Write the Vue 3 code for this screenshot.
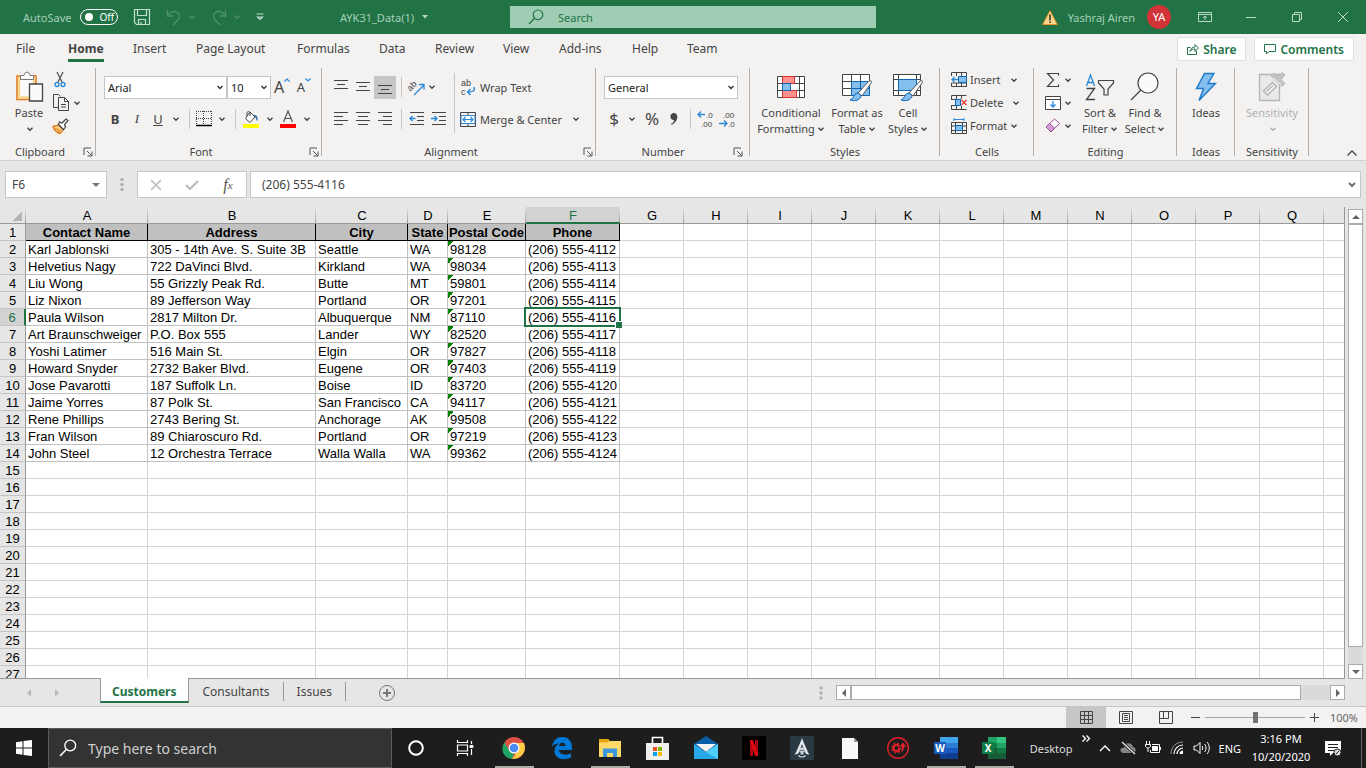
<script setup>
import { computed, ref } from "vue";

const menuTabs = ["File", "Home", "Insert", "Page Layout", "Formulas", "Data", "Review", "View", "Add-ins", "Help", "Team"];
const activeMenu = ref("Home");

const columns = "ABCDEFGHIJKLMNOPQ".split("");
const headings = ["Contact Name", "Address", "City", "State", "Postal Code", "Phone"];
const customers = [
  ["Karl Jablonski", "305 - 14th Ave. S. Suite 3B", "Seattle", "WA", "98128", "(206) 555-4112"],
  ["Helvetius Nagy", "722 DaVinci Blvd.", "Kirkland", "WA", "98034", "(206) 555-4113"],
  ["Liu Wong", "55 Grizzly Peak Rd.", "Butte", "MT", "59801", "(206) 555-4114"],
  ["Liz Nixon", "89 Jefferson Way", "Portland", "OR", "97201", "(206) 555-4115"],
  ["Paula Wilson", "2817 Milton Dr.", "Albuquerque", "NM", "87110", "(206) 555-4116"],
  ["Art Braunschweiger", "P.O. Box 555", "Lander", "WY", "82520", "(206) 555-4117"],
  ["Yoshi Latimer", "516 Main St.", "Elgin", "OR", "97827", "(206) 555-4118"],
  ["Howard Snyder", "2732 Baker Blvd.", "Eugene", "OR", "97403", "(206) 555-4119"],
  ["Jose Pavarotti", "187 Suffolk Ln.", "Boise", "ID", "83720", "(206) 555-4120"],
  ["Jaime Yorres", "87 Polk St.", "San Francisco", "CA", "94117", "(206) 555-4121"],
  ["Rene Phillips", "2743 Bering St.", "Anchorage", "AK", "99508", "(206) 555-4122"],
  ["Fran Wilson", "89 Chiaroscuro Rd.", "Portland", "OR", "97219", "(206) 555-4123"],
  ["John Steel", "12 Orchestra Terrace", "Walla Walla", "WA", "99362", "(206) 555-4124"],
];
const emptyRows = 30;

const rows = computed(() => {
  const list = [headings, ...customers];
  while (list.length < emptyRows) {
    list.push([]);
  }
  return list;
});

const selected = ref({ row: 5, col: 5 });
const cellName = computed(() => columns[selected.value.col] + (selected.value.row + 1));
const cellValue = computed(() => rows.value[selected.value.row][selected.value.col] || "");

const sheets = ["Customers", "Consultants", "Issues"];
const activeSheet = ref("Customers");
const zoom = ref(100);
const fontName = ref("Arial");
const fontSize = ref("10");
const numberFormat = ref("General");

function selectCell(row, col) {
  selected.value = { row, col };
}

function cellClass(row, col) {
  return {
    heading: row === 0 && col < 6,
    bordered: row > 0 && row <= customers.length && col < 6,
    flagged: row > 0 && row <= customers.length && col === 4,
    current: row === selected.value.row && col === selected.value.col,
  };
}
</script>

<template>
  <div class="window">
    <svg class="defs" aria-hidden="true">
      <symbol id="chev" viewBox="0 0 8 8"><path d="M1.5 2.8 4 5.2 6.5 2.8" fill="none" stroke="currentColor" stroke-width="1.4" /></symbol>
      <symbol id="launch" viewBox="0 0 10 10"><path d="M1 8V1h7M4 4l4.500 4.500M9 4.500V9H4.500" fill="none" stroke="#555" /></symbol>
      <symbol id="lens" viewBox="0 0 16 16"><circle cx="10" cy="5.800" r="4.800" fill="none" stroke="currentColor" stroke-width="1.200" /><path d="M6.500 9.300 1 15" stroke="currentColor" stroke-width="1.300" /></symbol>
    </svg>

    <header class="titlebar">
      <div class="quick">
        <label class="autosave">AutoSave <span class="toggle"><input type="checkbox" class="toggle-input" /><span class="knob"></span>Off</span></label>
        <button aria-label="Save"><svg width="18" height="18" viewBox="0 0 18 18" fill="none" stroke="#c5ddcf" stroke-width="1.200"><path d="M1.500 1.500h15v15h-13l-2-2zM4.500 1.500v6h9v-6M5.500 16.500v-5h7v5M8 16v-2" /></svg></button>
        <button class="faded" aria-label="Undo"><svg width="16" height="18" viewBox="0 0 16 18" fill="none" stroke="currentColor" stroke-width="1.400"><path d="M1.500 2v6h6M1.500 8c3-5 9-6 11.500-2 2 4-2 7-6 11" /></svg><svg class="chev"><use href="#chev" /></svg></button>
        <button class="faded" aria-label="Redo"><svg width="16" height="18" viewBox="0 0 16 18" fill="none" stroke="currentColor" stroke-width="1.400"><path d="M14.500 2v6h-6M14.500 8c-3-5-9-6-11.500-2-2 4 2 7 6 11" /></svg><svg class="chev"><use href="#chev" /></svg></button>
        <button aria-label="Customize"><svg width="8" height="8" viewBox="0 0 8 8" fill="none" stroke="#c5ddcf" stroke-width="1.200"><path d="M.500 1h7M1.500 4h5L4 6.500z" /></svg></button>
      </div>
      <button class="doc">AYK31_Data(1) <svg width="6" height="4" viewBox="0 0 6 4"><path d="M0 0h6L3 3.500z" fill="#b5d6c3" /></svg></button>
      <label class="search"><svg width="16" height="16"><use href="#lens" /></svg><input type="text" placeholder="Search" aria-label="Search" /></label>
      <div class="account">
        <svg width="16" height="15" viewBox="0 0 16 15"><path d="M8 .800 15.300 14.500H.700z" fill="#fbd78a" stroke="#e8912d" /><path d="M8 4.500v6M8 11.500v1.500" stroke="#333" stroke-width="1.600" /></svg>
        <span class="user">Yashraj Airen</span>
        <span class="avatar">YA</span>
        <div class="controls">
          <button aria-label="Ribbon options"><svg width="14" height="12" viewBox="0 0 14 12"><path d="M.500 1.500h13v9H.500zM.500 3.500h13M7 9V5M5 7l2-2 2 2" /></svg></button>
          <button aria-label="Minimize"><svg width="12" height="12" viewBox="0 0 12 12"><path d="M1 6.500h10" /></svg></button>
          <button aria-label="Restore"><svg width="12" height="12" viewBox="0 0 12 12"><path d="M1.500 3.500h7v7h-7zM3.500 3.500v-2h7v7h-2" /></svg></button>
          <button aria-label="Close"><svg width="12" height="12" viewBox="0 0 12 12"><path d="m1 1 10 10M11 1 1 11" /></svg></button>
        </div>
      </div>
    </header>

    <nav class="menu">
      <div class="menu-tabs">
        <button v-for="tab in menuTabs" :key="tab" :class="{ active: tab === activeMenu }" @click="activeMenu = tab"><span>{{ tab }}</span></button>
      </div>
      <div class="menu-actions">
        <button><svg width="12" height="12" viewBox="0 0 12 12" fill="none" stroke="#217346"><path d="M3.500 4.500h-3v7h9V8M3 8.500c.500-3 2.500-4.500 5-4.500V1.500l3.500 3.500L8 8.500V6C6 6 4 6.500 3 8.500z" /></svg>Share</button>
        <button><svg width="12" height="12" viewBox="0 0 12 12" fill="none" stroke="#217346"><path d="M.500 1.500h11v7H5l-2.500 2.500V8.500h-2z" /></svg>Comments</button>
      </div>
    </nav>

    <section class="ribbon">
      <div class="group clipboard">
        <div class="body">
          <button class="big">
            <span class="pic"><svg width="28" height="32" viewBox="0 0 28 32"><path d="M2 5h19v23.500H2z" fill="#fafafa" stroke="#e07a1f" stroke-width="1.600" /><path d="M4 7h15v19.500H4z" fill="none" stroke="#f8d48c" stroke-width="2.400" /><path d="M5.500 8.500v-4h3.500c.500-4.500 5.500-4.500 6 0h3.500v4z" fill="#fff" stroke="#777" /><path d="M14.500 13h13v17h-13z" fill="#fafafa" stroke="#444" stroke-width="1.300" /></svg></span>
            Paste
            <span><svg class="chev"><use href="#chev" /></svg></span>
          </button>
          <div class="stack">
            <button aria-label="Cut"><svg width="16" height="17" viewBox="0 0 16 17" fill="none"><path d="m5 1 5 10M11 1 6 11" stroke="#555" stroke-width="1.300" /><circle cx="5" cy="13.500" r="2" stroke="#2b88d8" stroke-width="1.300" /><circle cx="11" cy="13.500" r="2" stroke="#2b88d8" stroke-width="1.300" /></svg></button>
            <button aria-label="Copy"><svg width="18" height="17" viewBox="0 0 18 17" fill="none" stroke="#444"><path d="M6 13.500H1.500v-13h5l2 2M6.500 3.500h6l4 4v9h-10zM12.500 3.500v4h4M9 10.500h5M9 13h5" /></svg><svg class="chev"><use href="#chev" /></svg></button>
            <button aria-label="Format Painter"><svg width="17" height="16" viewBox="0 0 17 16"><path d="M1 8.500 6.500 7l5 4.500L8 15.500c-3-1-6-3-7-7z" fill="#fbd78a" stroke="#e07a1f" stroke-width="1.400" /><path d="m3 11 3 0 1 3.500M6 14l3-3" stroke="#e07a1f" fill="none" /><path d="m6.500 6.500 1-2.500 2.500 1 4-4L16 2.500l-3.500 4 1 2.500-2 2.500z" fill="#fff" stroke="#444" stroke-width="1.200" /></svg></button>
          </div>
        </div>
        <div class="caption"><span>Clipboard</span><button aria-label="Clipboard options"><svg width="10" height="10"><use href="#launch" /></svg></button></div>
      </div>

      <div class="group font">
        <div class="body rows">
          <div class="font-top">
            <select v-model="fontName" aria-label="Font"><option>Arial</option></select>
            <select v-model="fontSize" aria-label="Font size"><option>10</option></select>
            <button class="grow">A<svg width="6" height="4" viewBox="0 0 6 4"><path d="M.500 3.500 3 1l2.500 2.500" fill="none" stroke="#2b88d8" stroke-width="1.200" /></svg></button>
            <button class="shrink">A<svg width="6" height="4" viewBox="0 0 6 4"><path d="M.500.500 3 3 5.500.500" fill="none" stroke="#2b88d8" stroke-width="1.200" /></svg></button>
          </div>
          <div class="font-bottom">
            <button class="glyph bold">B</button>
            <button class="glyph italic">I</button>
            <button class="glyph under">U</button>
            <button aria-label="Underline options"><svg class="chev"><use href="#chev" /></svg></button>
            <i class="rule"></i>
            <button aria-label="Borders"><svg width="16" height="16" viewBox="0 0 16 16" fill="none" stroke="#444"><path d="M.500 0v14M7.500 0v14M15.500 0v14M0 .500h16M0 7.500h16" stroke-dasharray="1 1" /><path d="M0 14.500h16" stroke="#000" stroke-width="1.500" /></svg></button>
            <button aria-label="Border options"><svg class="chev"><use href="#chev" /></svg></button>
            <i class="rule"></i>
            <button aria-label="Fill color"><svg width="16" height="18" viewBox="0 0 16 18"><path d="m7 2 5 5-5 5.500L2.500 8.500z" fill="#fff" stroke="#444" /><path d="M4 6V3c0-2 3-2 3 0v3" fill="none" stroke="#444" /><path d="M11 5c3 0 4 2 3.500 6-2-1-1-4-3.500-5" fill="#2b6cb0" /><path d="M0 14h16v4H0z" fill="#ff0" /></svg></button>
            <button aria-label="Fill options"><svg class="chev"><use href="#chev" /></svg></button>
            <button aria-label="Font color"><svg width="16" height="18" viewBox="0 0 16 18"><path d="M3.500 12 8 1l4.500 11M5 8.500h6" fill="none" stroke="#555" stroke-width="1.200" /><path d="M0 14h16v4H0z" fill="#f00" /></svg></button>
            <button aria-label="Font color options"><svg class="chev"><use href="#chev" /></svg></button>
          </div>
        </div>
        <div class="caption"><span>Font</span><button aria-label="Font options"><svg width="10" height="10"><use href="#launch" /></svg></button></div>
      </div>

      <div class="group alignment">
        <div class="body align-grid">
          <button aria-label="Top align"><svg width="14" height="16" viewBox="0 0 14 16"><path class="ln" d="M0 1.500h14M3 5.500h8M0 9.500h14" /></svg></button>
          <button aria-label="Middle align"><svg width="14" height="16" viewBox="0 0 14 16"><path class="ln" d="M0 3.500h14M3 7.500h8M0 11.500h14" /></svg></button>
          <button class="pressed" aria-label="Bottom align"><svg width="14" height="16" viewBox="0 0 14 16"><path class="ln" d="M0 6.500h14M3 10.500h8M0 14.500h14" /></svg></button>
          <i class="rule"></i>
          <button class="orient" aria-label="Orientation"><svg width="17" height="17" viewBox="0 0 17 17"><text x="-1" y="9" transform="rotate(-45 5 7)" class="tiny slant">ab</text><path d="M6 16 15.500 6.500M11 5.500h5v5" fill="none" stroke="#2b88d8" stroke-width="1.300" /></svg><svg class="chev"><use href="#chev" /></svg></button>
          <i class="rule tall"></i>
          <button class="wide"><svg width="16" height="18" viewBox="0 0 16 18"><text x="1" y="8" class="tiny slant">ab</text><text x="1" y="17" class="tiny slant">c</text><path d="M14 9c1.500 4-1 5-6.500 5M10.500 11l-3 3 3 3" fill="none" stroke="#2b88d8" stroke-width="1.400" /></svg>Wrap Text</button>
          <button aria-label="Align left"><svg width="14" height="14" viewBox="0 0 14 14"><path class="ln" d="M0 .500h14M0 4.500h9M0 8.500h14M0 12.500h9" /></svg></button>
          <button aria-label="Center"><svg width="14" height="14" viewBox="0 0 14 14"><path class="ln" d="M0 .500h14M2 4.500h10M0 8.500h14M2 12.500h10" /></svg></button>
          <button aria-label="Align right"><svg width="14" height="14" viewBox="0 0 14 14"><path class="ln" d="M0 .500h14M5 4.500h9M0 8.500h14M5 12.500h9" /></svg></button>
          <i class="rule"></i>
          <button aria-label="Decrease indent"><svg width="16" height="14" viewBox="0 0 16 14"><path class="ln" d="M1 .500h14M8 4.500h7M8 8.500h7M1 12.500h14" /><path d="M6.500 6.500H1M3.500 4 1 6.500 3.500 9" fill="none" stroke="#2b88d8" stroke-width="1.300" /></svg></button>
          <button aria-label="Increase indent"><svg width="16" height="14" viewBox="0 0 16 14"><path class="ln" d="M1 .500h14M8 4.500h7M8 8.500h7M1 12.500h14" /><path d="M0 6.500h6M3.500 4 6 6.500 3.500 9" fill="none" stroke="#2b88d8" stroke-width="1.300" /></svg></button>
          <button class="wide"><svg width="16" height="15" viewBox="0 0 16 15" fill="none"><path d="M.500.500h15v14H.500zM8 .500v3M8 11.500v3" stroke="#444" /><path d="M1 3.500h14v8H1z" fill="#fff" stroke="#2b88d8" /><path d="M3 7.500h10M5.500 5 3 7.500 5.500 10M10.500 5 13 7.500 10.500 10" stroke="#2b88d8" stroke-width="1.200" /></svg>Merge &amp; Center<svg class="chev far"><use href="#chev" /></svg></button>
        </div>
        <div class="caption"><span>Alignment</span><button aria-label="Alignment options"><svg width="10" height="10"><use href="#launch" /></svg></button></div>
      </div>

      <div class="group number">
        <div class="body rows">
          <div class="number-top"><select v-model="numberFormat" aria-label="Number format"><option>General</option></select></div>
          <div class="number-bottom">
            <button class="sign">$</button>
            <button aria-label="Currency options"><svg class="chev"><use href="#chev" /></svg></button>
            <button class="sign">%</button>
            <button aria-label="Comma style"><svg width="8" height="12" viewBox="0 0 8 12"><path d="M4 0c5 0 4.500 9-2.500 12l-.500-1c2-1 3-2.500 3-4C-1 7-.500 0 4 0z" fill="#444" /></svg></button>
            <i class="rule"></i>
            <button aria-label="Increase decimal"><svg width="17" height="18" viewBox="0 0 17 18"><text x="9" y="8" class="tiny">.0</text><text x="4" y="17" class="tiny">.00</text><path d="M8 4.500H1M4 1.500l-3 3 3 3" fill="none" stroke="#2b88d8" stroke-width="1.300" /></svg></button>
            <button aria-label="Decrease decimal"><svg width="17" height="18" viewBox="0 0 17 18"><text x="4" y="8" class="tiny">.00</text><text x="9" y="17" class="tiny">.0</text><path d="M0 13.500h8M5 10.500l3 3-3 3" fill="none" stroke="#2b88d8" stroke-width="1.300" /></svg></button>
          </div>
        </div>
        <div class="caption"><span>Number</span><button aria-label="Number options"><svg width="10" height="10"><use href="#launch" /></svg></button></div>
      </div>

      <div class="group styles">
        <div class="body">
          <button class="big">
            <span class="pic"><svg width="28" height="24" viewBox="0 0 28 24"><path d="M.500 1.500h27v21H.500zM.500 8.500h27M.500 15.500h27M22.500 1v21M5.500 1v21" fill="#fff" stroke="#444" /><path d="M5.500 1.500h12v7h-12zM5.500 15.500h14v7h-14z" fill="#ff9090" stroke="#d33" /><path d="M5.500 8.500h8v7h-8z" fill="#83beec" stroke="#1267b4" /></svg></span>
            Conditional<span>Formatting<svg class="chev"><use href="#chev" /></svg></span>
          </button>
          <button class="big">
            <span class="pic"><svg width="32" height="28" viewBox="0 0 32 28"><path d="M1.500 1.500h27v21h-27zM1.500 8.500h27M1.500 15.500h27M10.500 1v21M19.500 1v21" fill="#fff" stroke="#444" /><path d="M10.500 8.500h18v14h-18zM10.500 15.500h18M19.500 8v14" fill="#83beec" stroke="#1267b4" /><path d="M17 20 28 8c2-1 3 0 2 2l-9 13z" fill="#fff" stroke="#555" /><path d="M9 27c4-1 3-6 7-7 3 0 5 3 3 5-2 3-6 3-10 2z" fill="#83beec" stroke="#1267b4" /></svg></span>
            Format as<span>Table<svg class="chev"><use href="#chev" /></svg></span>
          </button>
          <button class="big">
            <span class="pic"><svg width="32" height="28" viewBox="0 0 32 28"><path d="M1.500 1.500h27v21h-27zM1.500 6.500h27M1.500 17.500h27M6.500 1v21M24.500 1v21" fill="#fff" stroke="#444" /><path d="M6.500 6.500h18v11h-18z" fill="#83beec" stroke="#1267b4" /><path d="M17 20 28 8c2-1 3 0 2 2l-9 13z" fill="#fff" stroke="#555" /><path d="M9 27c4-1 3-6 7-7 3 0 5 3 3 5-2 3-6 3-10 2z" fill="#83beec" stroke="#1267b4" /></svg></span>
            Cell<span>Styles<svg class="chev"><use href="#chev" /></svg></span>
          </button>
        </div>
        <div class="caption"><span>Styles</span></div>
      </div>

      <div class="group cells">
        <div class="body stack">
          <button><svg width="16" height="15" viewBox="0 0 16 15" fill="none"><path d="M.500 4V.500h15v3.500M.500 11v3.500h15V11M5.500.500V4M10.500.500V4M5.500 11v3.500M10.500 11v3.500M.500 11h15" stroke="#444" /><path d="M7.500 4.500h8v6h-8z" fill="#83beec" stroke="#1267b4" /><path d="M7 7.500H1M3.500 5 1 7.500 3.500 10" stroke="#2b88d8" stroke-width="1.300" /></svg>Insert<svg class="chev far"><use href="#chev" /></svg></button>
          <button><svg width="16" height="15" viewBox="0 0 16 15" fill="none"><path d="M.500 4V.500h15M.500 11v3.500h15M5.500.500V4M10.500.500V4M5.500 11v3.500M10.500 11v3.500M0 4.500h10M0 10.500h10" stroke="#444" /><path d="M4.500 4.500h5v6h-5z" fill="#83beec" stroke="#1267b4" /><path d="m10.500 5 5 5M15.500 5l-5 5" stroke="#e03c31" stroke-width="1.400" /></svg>Delete<svg class="chev far"><use href="#chev" /></svg></button>
          <button><svg width="16" height="16" viewBox="0 0 16 16" fill="none"><path d="M.500 4.500h15v11H.500zM4.500 4v11M11.500 4v11M.500 8h15M.500 12.500h15" stroke="#444" /><path d="M4.500 7.500h7v5h-7z" fill="#83beec" stroke="#1267b4" /><path d="M3 1.500h10M3 0v3M13 0v3" stroke="#2b88d8" /></svg>Format<svg class="chev"><use href="#chev" /></svg></button>
        </div>
        <div class="caption"><span>Cells</span></div>
      </div>

      <div class="group editing">
        <div class="body">
          <div class="stack">
            <button aria-label="AutoSum"><svg width="16" height="16" viewBox="0 0 16 16"><path d="M13.500 3.500v-2h-11L8.500 8l-6 6.500h11v-2" fill="none" stroke="#444" stroke-width="1.200" /></svg><svg class="chev"><use href="#chev" /></svg></button>
            <button aria-label="Fill"><svg width="16" height="16" viewBox="0 0 16 16"><path d="M.500 1.500h15v13H.500zM.500 4.500h15" fill="#fff" stroke="#444" /><path d="M8 6v6M5.500 9.500 8 12l2.500-2.500" fill="none" stroke="#2b88d8" stroke-width="1.300" /></svg><svg class="chev"><use href="#chev" /></svg></button>
            <button aria-label="Clear"><svg width="16" height="16" viewBox="0 0 16 16"><path d="m1 9 8.500-8 5 4.500L6 14z" fill="#fff" stroke="#9b4f96" /><path d="m1 9 3.500-3.500L9.500 10 6 14z" fill="#d59dd5" stroke="#9b4f96" /></svg><svg class="chev"><use href="#chev" /></svg></button>
          </div>
          <button class="big">
            <span class="pic"><svg width="30" height="28" viewBox="0 0 30 28" fill="none"><path d="M1.500 13 5.500 2l4 11M3 9.500h5" stroke="#2b88d8" stroke-width="1.300" /><path d="M1.500 15.500h8l-8 11h8.500" stroke="#444" stroke-width="1.300" /><path d="M13.500 7.500h15v2.500l-5.500 6v6h-4v-6l-5.500-6z" stroke="#444" stroke-width="1.200" /></svg></span>
            Sort &amp;<span>Filter<svg class="chev"><use href="#chev" /></svg></span>
          </button>
          <button class="big">
            <span class="pic"><svg width="30" height="30" viewBox="0 0 30 30"><circle cx="18" cy="11" r="10" fill="#fafafa" stroke="#444" stroke-width="1.200" /><path d="M11 18 1 28" stroke="#444" stroke-width="1.300" /></svg></span>
            Find &amp;<span>Select<svg class="chev"><use href="#chev" /></svg></span>
          </button>
        </div>
        <div class="caption"><span>Editing</span></div>
      </div>

      <div class="group ideas">
        <div class="body">
          <button class="big"><span class="pic"><svg width="24" height="30" viewBox="0 0 24 30"><path d="M10.500 1.500h9.500l-6 10h7.500L5 28.500l4.500-12H2.500z" fill="#83beec" stroke="#1e7ac8" stroke-width="1.400" /></svg></span>Ideas</button>
        </div>
        <div class="caption"><span>Ideas</span></div>
      </div>

      <div class="group sensitivity">
        <div class="body">
          <button class="big" disabled>
            <span class="pic"><svg width="28" height="32" viewBox="0 0 28 32" fill="none" stroke="#b5b5b5"><path d="M1.500 3.500h20v26h-20z" fill="#e9e9e9" stroke-width="1.300" /><path d="m5.500 20 9-8.500 4 4-9 8.500z" fill="#f3f2f1" stroke-width="1.400" /><path d="m8.500 20.500 6.500-6" stroke-width="1.300" /><path d="m13 5 3-3 4 3.500 4-4L27 4l-4 4.500 4 4-3 3z" fill="#c4c4c4" /><path d="m15 6.500 8 7.500" stroke="#f3f2f1" /></svg></span>
            Sensitivity<span><svg class="chev"><use href="#chev" /></svg></span>
          </button>
        </div>
        <div class="caption"><span>Sensitivity</span></div>
      </div>
      <button class="collapse" aria-label="Collapse ribbon"><svg width="10" height="6" viewBox="0 0 10 6"><path d="M.500 5.500 5 1l4.500 4.500" fill="none" stroke="#444" stroke-width="1.300" /></svg></button>
    </section>

    <section class="formula">
      <label class="namebox"><input type="text" :value="cellName" aria-label="Name box" /><svg width="8" height="4" viewBox="0 0 8 4"><path d="M0 0h8L4 4z" fill="#777" /></svg></label>
      <span class="dots"></span>
      <div class="fx">
        <button aria-label="Cancel"><svg width="12" height="10" viewBox="0 0 12 10"><path d="m1 0 10 10M11 0 1 10" stroke="#bbb" stroke-width="1.600" /></svg></button>
        <button aria-label="Enter"><svg width="14" height="10" viewBox="0 0 14 10"><path d="m1 5 4 4 8-8" fill="none" stroke="#bbb" stroke-width="2.200" /></svg></button>
        <button class="fn">f<sub>x</sub></button>
      </div>
      <label class="entry"><input type="text" :value="cellValue" aria-label="Formula bar" /><svg width="8" height="6" viewBox="0 0 8 6"><path d="m1 1 3 3 3-3" fill="none" stroke="#666" stroke-width="1.800" /></svg></label>
    </section>

    <main class="sheet">
      <div class="grid">
        <table>
          <colgroup>
            <col class="w-num" /><col class="w-a" /><col class="w-b" /><col class="w-c" /><col class="w-d" /><col class="w-e" /><col class="w-f" />
            <col v-for="n in 11" :key="n" class="w-rest" />
            <col />
          </colgroup>
          <thead>
            <tr>
              <th class="corner"></th>
              <th v-for="(letter, c) in columns" :key="letter" :class="{ on: c === selected.col }">{{ letter }}</th>
              <th class="last"></th>
            </tr>
          </thead>
          <tbody>
            <tr v-for="(row, r) in rows" :key="r">
              <th :class="{ on: r === selected.row }">{{ r + 1 }}</th>
              <td v-for="(letter, c) in columns" :key="letter" :class="cellClass(r, c)" @click="selectCell(r, c)">{{ row[c] }}</td>
              <td class="last"></td>
            </tr>
          </tbody>
        </table>
      </div>
      <div class="vscroll">
        <button aria-label="Scroll up"><svg width="8" height="4" viewBox="0 0 8 4"><path d="M0 4h8L4 0z" /></svg></button>
        <div class="thumb"></div>
        <button aria-label="Scroll down"><svg width="8" height="4" viewBox="0 0 8 4"><path d="M0 0h8L4 4z" /></svg></button>
      </div>
    </main>

    <section class="sheetbar">
      <div class="arrows">
        <button aria-label="Previous sheet"><svg width="4" height="8" viewBox="0 0 4 8"><path d="M4 0v8L0 4z" /></svg></button>
        <button aria-label="Next sheet"><svg width="4" height="8" viewBox="0 0 4 8"><path d="M0 0v8l4-4z" /></svg></button>
      </div>
      <div class="sheet-tabs">
        <button v-for="name in sheets" :key="name" :class="{ active: name === activeSheet }" @click="activeSheet = name">{{ name }}</button>
      </div>
      <button class="add" aria-label="New sheet"><svg width="18" height="18" viewBox="0 0 18 18" fill="none" stroke="#767676"><circle cx="9" cy="9" r="7.500" /><path d="M9 5v8M5 9h8" stroke-width="2" /></svg></button>
      <span class="dots"></span>
      <div class="hscroll">
        <button aria-label="Scroll left"><svg width="4" height="8" viewBox="0 0 4 8"><path d="M4 0v8L0 4z" /></svg></button>
        <div class="thumb"></div>
        <button aria-label="Scroll right"><svg width="4" height="8" viewBox="0 0 4 8"><path d="M0 0v8l4-4z" /></svg></button>
      </div>
    </section>

    <footer class="status">
      <button class="view on" aria-label="Normal"><svg width="13" height="13" viewBox="0 0 13 13"><path d="M.500.500h12v12H.500zM4.500 0v13M8.500 0v13M0 4.500h13M0 8.500h13" /></svg></button>
      <button class="view" aria-label="Page layout"><svg width="14" height="13" viewBox="0 0 14 13"><path d="M.500.500h13v12H.500zM3.500 2.500h7v8h-7zM5 4.500h4M5 6.500h4M5 8.500h4" /></svg></button>
      <button class="view" aria-label="Page break preview"><svg width="14" height="13" viewBox="0 0 14 13"><path d="M.500.500h13v12H.500zM4.500 0v7M9.500 0v7.500M0 7.500h9.500" /></svg></button>
      <button class="step" aria-label="Zoom out"><svg width="9" height="9" viewBox="0 0 9 9"><path d="M0 4.500h9" /></svg></button>
      <input v-model="zoom" type="range" min="0" max="200" aria-label="Zoom" />
      <button class="step" aria-label="Zoom in"><svg width="9" height="9" viewBox="0 0 9 9"><path d="M0 4.500h9M4.500 0v9" /></svg></button>
      <span class="percent">{{ zoom }}%</span>
    </footer>

    <footer class="taskbar">
      <button class="slot" aria-label="Start"><svg width="16" height="16" viewBox="0 0 16 16" fill="#fff"><path d="m0 2.200 6.500-1v6.300H0zM7.500 1 16 0v7.500H7.500zM0 8.500h6.500v6.300l-6.500-1zM7.500 8.500H16V16l-8.500-1z" /></svg></button>
      <label class="tasksearch"><svg width="18" height="18"><use href="#lens" /></svg><input type="text" placeholder="Type here to search" aria-label="Type here to search" /></label>
      <button class="slot" aria-label="Cortana"><svg width="18" height="18" viewBox="0 0 18 18"><circle cx="9" cy="9" r="6.800" fill="none" stroke="#fff" stroke-width="2" /></svg></button>
      <button class="slot taskview" aria-label="Task view"><svg width="18" height="16" viewBox="0 0 18 16" fill="none" stroke="#fff"><path d="M1.500 0v2.500h10V0M1.500 16v-2.500h10V16M1.500 5h10v6h-10zM15.500 1v3M15.500 9v6" stroke-width="1.200" /><path d="M14 5.500h3v2h-3z" fill="#fff" /></svg></button>
      <button class="slot open" aria-label="Chrome"><svg width="24" height="24" viewBox="0 0 24 24"><circle cx="12" cy="12" r="11" fill="#dd5144" /><path d="M2.500 6.500 7.500 15l4.500 2-2 6C-1 21-1 11 2.500 6.500z" fill="#1da462" /><path d="M12 7h10c3 8-2 16-12 16l6.500-9z" fill="#ffcd46" /><circle cx="12" cy="12" r="5.500" fill="#fff" /><circle cx="12" cy="12" r="4.300" fill="#4c8bf5" /></svg></button>
      <button class="slot" aria-label="Edge"><svg width="22" height="24" viewBox="0 0 22 24"><path d="M1 11C2 4 6 1 11.500 1 18 1 21 6 21 11v3H8c.500 5 8 6 12 3v4.500C13 25 3.500 23 3.500 15c0-4 2-6 4.500-7.500C4.500 7.500 2 9 1 11zm7-1h6.500c0-4.500-6-4.500-6.500 0z" fill="#0078d7" /></svg></button>
      <button class="slot open" aria-label="File Explorer"><svg width="22" height="20" viewBox="0 0 22 20"><path d="M0 1h9l2 2h11v16H0z" fill="#ffd968" /><path d="M0 1h9l1.500 2L9 4.500H0z" fill="#e5a50a" /><path d="M4 19v-8.500h14V19h-4v-4H8v4z" fill="#3a96dd" /></svg></button>
      <button class="slot" aria-label="Store"><svg width="24" height="24" viewBox="0 0 24 24"><path d="M6.500 7V1.500h10V7" fill="none" stroke="#fff" stroke-width="1.600" /><path d="M0 7h23v17H0z" fill="#f0f0f0" /><path d="M7 11h4v4H7z" fill="#f25022" /><path d="M12 11h4v4h-4z" fill="#7fba00" /><path d="M7 16h4v4H7z" fill="#00a4ef" /><path d="M12 16h4v4h-4z" fill="#ffb900" /></svg></button>
      <button class="slot" aria-label="Mail"><svg width="24" height="24" viewBox="0 0 24 24"><path d="M0 8 12 0l12 8v5H0z" fill="#0a5ea8" /><path d="M2 8h20L12 16z" fill="#f5f5f5" /><path d="M0 8v15h24V8L12 16z" fill="#28a8ea" /><path d="M24 8v15L12 16z" fill="#50d0f8" /></svg></button>
      <button class="slot" aria-label="Netflix"><svg width="24" height="24" viewBox="0 0 24 24"><path d="M0 0h24v24H0z" fill="#000" /><path d="M8 4h3v16H8zM13 4h3v16h-3z" fill="#b1060f" /><path d="M8 4h3l5 16h-3z" fill="#e50914" /></svg></button>
      <button class="slot" aria-label="Game"><svg width="24" height="24" viewBox="0 0 24 24"><path d="M0 0h24v24H0z" fill="#2b3943" /><path d="m12 2 1.500 4 3.500 8c.500 2 1.500 3 2.500 4.500-3 0-4.500-1-5-3.500L12 8l-2.500 7c-.500 2.500-2 3.500-5 3.500C5.500 17 6.500 16 7 14l3.500-8z" fill="#e3e8ea" /><path d="M9.500 13.500c0-3 5-3 5 0v2l-1 1v2h-3v-2l-1-1z" fill="#c9d0d4" /><path d="M10.300 14.500h1.200M12.500 14.500h1.200" stroke="#2b3943" stroke-width="1.200" /><path d="M8.500 19.500c2 2 5 2 7 0" stroke="#e3e8ea" stroke-width="1.200" fill="none" /></svg></button>
      <button class="slot" aria-label="Document"><svg width="16" height="21" viewBox="0 0 16 21"><path d="M0 0h12l4 4v17H0z" fill="#f7f7f7" /><path d="M12 0v4h4z" fill="#999" /></svg></button>
      <button class="slot" aria-label="Updater"><svg width="24" height="24" viewBox="0 0 24 24" fill="none" stroke="#e0222a"><circle cx="12" cy="12" r="10.300" stroke-width="1.400" /><circle cx="10.500" cy="12" r="3" stroke-width="2" /><circle cx="10.500" cy="12" r="4.600" stroke-width="1.600" stroke-dasharray="2 1.600" /><path d="M17 6l4 5h-2.500c0 3-1.500 5-4.500 6.500 1.500-2 1.500-4 1.500-6.500H13z" fill="#e0222a" stroke="#1d1d1d" stroke-width=".8" /></svg></button>
      <button class="slot open" aria-label="Word"><svg width="24" height="22" viewBox="0 0 24 22"><path d="M6 0h18v6H6z" fill="#41a5ee" /><path d="M6 6h18v5H6z" fill="#2b7cd3" /><path d="M6 11h18v5H6z" fill="#185abd" /><path d="M6 16h18v6H6z" fill="#103f91" /><path d="M0 5h12v12H0z" fill="#185abd" /><text x="6" y="15" class="mark">W</text></svg></button>
      <button class="slot open" aria-label="Excel"><svg width="24" height="22" viewBox="0 0 24 22"><path d="M6 0h18v6H6z" fill="#21a366" /><path d="M15 0h9v6h-9z" fill="#33c481" /><path d="M6 6h18v5H6z" fill="#107c41" /><path d="M15 6h9v5h-9z" fill="#21a366" /><path d="M6 11h18v11H6z" fill="#185c37" /><path d="M15 11h9v5h-9z" fill="#107c41" /><path d="M0 5h12v12H0z" fill="#107c41" /><text x="6" y="15" class="mark">X</text></svg></button>
      <div class="tray">
        <button class="desktop">Desktop</button>
        <button class="more" aria-label="More"><svg width="8" height="7" viewBox="0 0 8 7"><path d="m.500.500 3 3-3 3M4.500.500l3 3-3 3" fill="none" stroke="#fff" stroke-width="1.300" /></svg></button>
        <button aria-label="Hidden icons"><svg width="12" height="8" viewBox="0 0 12 8"><path d="M1 7l5-5 5 5" fill="none" stroke="#fff" stroke-width="1.400" /></svg></button>
        <button aria-label="OneDrive"><svg width="16" height="14" viewBox="0 0 16 14"><path d="M3 12c-4-1-3-6 1-5 0-6 8-6 9-1 4 1 3 6 0 6z" fill="#868686" /><path d="m2 1 13 12" stroke="#1d1d1d" stroke-width="3" /><path d="m2 1 13 12" stroke="#eee" stroke-width="1.200" /></svg></button>
        <button aria-label="Battery"><svg width="16" height="14" viewBox="0 0 16 14" fill="none" stroke="#fff"><path d="M7 3.500h7.500v8H5.500V9M15.500 6v3M1.500 0v3M4.500 0v3M.500 3.500h5v2c-1.500 2-3.500 2-5 0zM3 7v4" /><path d="M7.500 5.500h5v4h-5z" fill="#fff" /></svg></button>
        <button aria-label="Network"><svg width="14" height="14" viewBox="0 0 14 14" fill="none"><path d="M1 13C1 6 6 1 13 1" stroke="#999" /><path d="M4 13c0-5 4-9 9-9M7 13c0-3 3-6 6-6" stroke="#fff" stroke-width="1.200" /><path d="M9.500 13c0-2 1.500-3.500 3.500-3.500V13z" fill="#fff" /></svg></button>
        <button aria-label="Volume"><svg width="17" height="14" viewBox="0 0 17 14" fill="none" stroke="#fff"><path d="M1 5h2.500L7 1.500v11L3.500 9H1zM9 5c1 1 1 3 0 4M11.500 3c2 2 2 6 0 8M14 1c3 3 3 9 0 12" /></svg></button>
        <button>ENG</button>
        <button class="clock">3:16 PM<br />10/20/2020</button>
        <button aria-label="Notifications"><svg width="17" height="17" viewBox="0 0 17 17"><path d="M0 1h16v12H8l-3 3v-3H0z" fill="#fff" /><path d="M3 4.500h10M3 7.500h10M3 10.500h6" stroke="#222" stroke-width="1.200" /><circle cx="12.500" cy="12.500" r="3.500" fill="#ddd" stroke="#222" /><path d="m11 14 3-3" stroke="#222" /></svg></button>
      </div>
    </footer>
  </div>
</template>

<style>
body {
  margin: 0;
}
</style>

<style scoped>
.window {
  display: flex;
  flex-direction: column;
  height: 100vh;
  overflow: hidden;
  font-family: "Noto Sans", "Open Sans", sans-serif;
  font-size: 11px;
  color: #444;
  background: #e6e6e6;
}

.window * {
  box-sizing: border-box;
}

.defs {
  display: none;
}

button,
input,
select {
  font: inherit;
  color: inherit;
  border: 0;
  padding: 0;
  margin: 0;
  background: none;
  outline: none;
}

button {
  display: flex;
  align-items: center;
  justify-content: center;
  white-space: nowrap;
}

svg {
  flex: none;
  overflow: visible;
}

.chev {
  width: 8px;
  height: 8px;
}

.tiny {
  font-family: "Liberation Sans", Arial, sans-serif;
  font-size: 8px;
  fill: #444;
}

.slant {
  font-size: 9px;
}

.ln {
  fill: none;
  stroke: #444;
}

/* title bar */
.titlebar {
  display: grid;
  grid-template-columns: 340px 170px minmax(0, 366px) 1fr;
  align-items: center;
  flex: none;
  height: 34px;
  background: #217346;
  color: #a6cfb8;
}

.quick {
  display: flex;
  align-items: center;
  gap: 15px;
  padding-left: 23px;
}

.quick button {
  gap: 6px;
}

.faded {
  color: #4f9069;
}

.autosave {
  display: flex;
  align-items: center;
  gap: 9px;
}

.toggle {
  display: flex;
  align-items: center;
  gap: 6px;
  width: 38px;
  height: 16px;
  padding-left: 4px;
  border: 1px solid #fff;
  border-radius: 8px;
  font-size: 10px;
  color: #fff;
}

.toggle-input {
  position: absolute;
  opacity: 0;
}

.knob {
  width: 8px;
  height: 8px;
  border-radius: 50%;
  background: #fff;
}

.doc {
  justify-self: start;
  gap: 8px;
}

.search {
  display: flex;
  align-items: center;
  gap: 14px;
  height: 22px;
  padding-left: 18px;
  background: #9fcdb3;
  color: #217346;
}

.search input::placeholder {
  color: #217346;
  opacity: 1;
}

.account {
  display: flex;
  align-items: center;
  justify-content: flex-end;
}

.user {
  padding: 0 12px 0 10px;
}

.avatar {
  width: 24px;
  height: 24px;
  border-radius: 50%;
  background: #d13438;
  color: #fff;
  line-height: 24px;
  text-align: center;
}

.controls {
  display: flex;
  padding-left: 11px;
}

.controls button {
  width: 46px;
  height: 34px;
}

.controls path {
  fill: none;
  stroke: #b9dac7;
}

/* menu */
.menu {
  display: flex;
  justify-content: space-between;
  flex: none;
  height: 30px;
  padding: 0 12px 0 16px;
  background: #f3f2f1;
  font-size: 12px;
}

.menu-tabs {
  display: grid;
  grid-template-columns: 52px 65px 63px 101px 82px 56px 68px 56px 73px 55px 45px;
}

.menu-tabs button {
  justify-content: flex-start;
}

.menu-tabs span {
  height: 26px;
  line-height: 26px;
}

.menu-tabs .active span {
  font-weight: bold;
  border-bottom: 3px solid #217346;
}

.menu-actions {
  display: flex;
  align-items: center;
  gap: 8px;
}

.menu-actions button {
  gap: 4px;
  height: 24px;
  padding: 0 9px;
  border: 1px solid #e1dfdd;
  border-radius: 2px;
  background: #fff;
  color: #217346;
  font-weight: 600;
}

/* ribbon */
.ribbon {
  display: flex;
  flex: none;
  height: 96px;
  background: #f3f2f1;
}

.group {
  display: flex;
  flex-direction: column;
  flex: none;
  padding-top: 4px;
  background: linear-gradient(#b3b0ad, #b3b0ad) no-repeat right 4px / 1px 88px;
}

.body {
  display: grid;
  height: 76px;
  align-items: start;
}

.caption {
  display: flex;
  height: 16px;
  line-height: 16px;
}

.caption span {
  flex: 1;
  text-align: center;
}

.caption button {
  width: 16px;
}

.rows {
  grid-template-rows: 32px 32px;
  align-items: stretch;
  padding: 3px 8px 0;
}

.rule {
  width: 1px;
  height: 20px;
  background: #c8c6c4;
}

.big {
  flex-direction: column;
  justify-content: flex-start;
  line-height: 16px;
}

.pic {
  display: flex;
  align-items: center;
  height: 37px;
}

.big .chev {
  margin-left: 2px;
}

.big:disabled {
  color: #b1b1b1;
}

.stack {
  display: grid;
  grid-template-rows: 23px 23px 23px;
  justify-items: start;
  align-content: start;
}

.stack button {
  gap: 3px;
  height: 23px;
}

.far {
  margin-left: 6px;
}

.clipboard {
  width: 96px;
}

.clipboard .body {
  grid-template-columns: 34px 1fr;
  gap: 6px;
  padding-left: 12px;
}

.font {
  width: 226px;
}

.font-top {
  display: grid;
  grid-template-columns: 123px 44px 22px 22px;
  align-items: center;
}

.font-bottom {
  display: grid;
  grid-template-columns: 22px 22px 20px 16px 10px 20px 16px 11px 20px 17px 20px 17px;
  align-items: center;
  justify-items: center;
}

select {
  appearance: none;
  width: 100%;
  height: 23px;
  padding-left: 3px;
  border: 1px solid #c8c6c4;
  border-radius: 0;
  color: #222;
  background: #fff url("data:image/svg+xml,%3Csvg xmlns='http://www.w3.org/2000/svg' width='8' height='8'%3E%3Cpath d='M1.500 3 4 5.500 6.500 3' fill='none' stroke='%23333' stroke-width='1.400'/%3E%3C/svg%3E") no-repeat right 2px center;
}

.grow,
.shrink {
  align-items: flex-start;
  font-size: 16px;
  line-height: 18px;
}

.shrink {
  font-size: 13px;
}

.glyph {
  font-size: 13px;
}

.bold {
  font-weight: bold;
}

.italic {
  font-family: "Liberation Serif", serif;
  font-style: italic;
}

.under {
  text-decoration: underline;
}

.alignment {
  width: 274px;
}

.align-grid {
  grid-template-columns: 22px 22px 22px 10px 22px 22px 8px 1fr;
  grid-template-rows: 32px 32px;
  align-items: center;
  justify-items: center;
  padding: 3px 8px 0;
}

.align-grid button {
  height: 23px;
  width: 22px;
}

.align-grid .pressed {
  background: #c8c6c4;
}

.align-grid .orient {
  grid-column: span 2;
  justify-self: start;
  gap: 3px;
  width: 32px;
}

.align-grid .tall {
  grid-area: 1 / 7 / 3 / 8;
  height: 60px;
}

.align-grid .wide {
  grid-column: 8;
  justify-self: start;
  gap: 4px;
  width: auto;
  padding-left: 2px;
}

.number {
  width: 154px;
}

.number .caption {
  padding-right: 4px;
}

.number-top {
  display: grid;
  align-items: center;
  padding-right: 4px;
}

.number-bottom {
  display: grid;
  grid-template-columns: 20px 16px 24px 20px 12px 18px 26px;
  align-items: center;
  justify-items: center;
}

.sign {
  font-size: 17px;
  line-height: 20px;
}

.styles {
  width: 190px;
}

.styles .body {
  grid-template-columns: 74px 58px 44px;
  padding-left: 4px;
}

.cells {
  width: 94px;
}

.cells .body {
  padding-left: 11px;
}

.editing {
  width: 143px;
}

.editing .body {
  grid-template-columns: 34px 42px 48px;
  padding-left: 11px;
}

.ideas {
  width: 58px;
}

.sensitivity {
  width: 74px;
}

.collapse {
  align-self: flex-end;
  margin-left: auto;
  width: 28px;
  height: 14px;
}

/* formula bar */
.formula {
  display: flex;
  flex: none;
  height: 47px;
  padding: 10px 5px 9px;
  border-top: 1px solid #d2d0ce;
  font-size: 12px;
}

.namebox,
.fx,
.entry {
  display: flex;
  align-items: center;
  border: 1px solid #c6c6c6;
  background: #fff;
}

.namebox {
  width: 102px;
  padding: 0 6px;
}

.namebox input {
  flex: 1;
  min-width: 0;
}

.dots {
  width: 30px;
  background: radial-gradient(circle, #a6a6a6 1px, transparent 2px) center / 5px 5px;
  background-clip: content-box;
  padding: 6px 13px;
}

.fx {
  width: 110px;
  margin-right: 3px;
}

.fx button {
  flex: 1;
}

.fn {
  font-family: "Liberation Serif", serif;
  font-style: italic;
  font-size: 16px;
  line-height: 16px;
  color: #555;
}

.fn sub {
  font-size: 11px;
}

.entry {
  flex: 1;
  padding: 0 4px 0 11px;
}

.entry input {
  flex: 1;
}

/* worksheet */
.sheet {
  display: flex;
  flex: 1;
  min-height: 0;
}

.grid {
  flex: 1;
  min-width: 0;
  overflow: hidden;
  border-right: 1px solid #999;
  border-bottom: 1px solid #999;
  font-family: "Liberation Sans", Arial, sans-serif;
  font-size: 13px;
  color: #000;
}

table {
  width: 100%;
  table-layout: fixed;
  border-collapse: separate;
  border-spacing: 0;
}

.w-num { width: 26px; }
.w-a { width: 122px; }
.w-b { width: 168px; }
.w-c { width: 92px; }
.w-d { width: 40px; }
.w-e { width: 78px; }
.w-f { width: 94px; }
.w-rest { width: 64px; }

th,
td {
  height: 17px;
  padding: 2px 0 0;
  line-height: 14px;
  white-space: nowrap;
}

td {
  position: relative;
  padding-left: 2px;
  border-right: 1px solid #d4d4d4;
  border-bottom: 1px solid #d4d4d4;
  background-color: #fff;
}

th {
  font-weight: normal;
  background: #e6e6e6;
}

thead th {
  border-bottom: 1px solid #999;
  background: linear-gradient(#e6e6e6, #999) no-repeat right / 1px 100% #e6e6e6;
}

thead th.on {
  color: #217346;
  background-color: #d2d2d2;
  box-shadow: inset 0 -1px #217346;
  border-bottom-color: #217346;
}

thead .corner {
  background:
    linear-gradient(#e6e6e6, #999) no-repeat right / 1px 100%,
    linear-gradient(135deg, transparent 50%, #b4b4b4 50%) no-repeat 13px 5px / 9px 9px;
}

tbody th {
  border-right: 1px solid #999;
  border-bottom: 1px solid #c4c4c4;
}

tbody th.on {
  color: #217346;
  background: #d2d2d2;
  border-right: 2px solid #217346;
}

td.bordered {
  border-color: #c0c0c0;
}

td.heading {
  padding-left: 0;
  border-color: #000;
  background: #c0c0c0;
  font-weight: bold;
  text-align: center;
}

td.flagged {
  background: linear-gradient(135deg, #008000 50%, transparent 50%) no-repeat 0 0 / 6px 6px #fff;
}

td.last {
  border-right: 0;
}

thead .last {
  background: #e6e6e6;
}

.current::before {
  content: "";
  position: absolute;
  inset: -2px;
  z-index: 1;
  border: 2px solid #217346;
}

.current::after {
  content: "";
  position: absolute;
  right: -3px;
  bottom: -3px;
  z-index: 2;
  width: 6px;
  height: 6px;
  border: solid #fff;
  border-width: 1px 0 0 1px;
  background: #217346;
}

.vscroll {
  display: flex;
  flex-direction: column;
  flex: none;
  width: 21px;
  padding: 2px 3px 0 3px;
}

.vscroll button,
.hscroll button {
  flex: none;
  width: 15px;
  height: 15px;
  border: 1px solid #ababab;
  background: #fff;
}

.vscroll path,
.hscroll path {
  fill: #666;
}

.vscroll .thumb {
  flex: 1;
  margin-bottom: 17px;
  box-shadow: 0 17px #dadada;
}

.thumb {
  border: 1px solid #ababab;
  background: #fff;
}

/* sheet tabs */
.sheetbar {
  display: flex;
  align-items: center;
  flex: none;
  height: 28px;
  padding-right: 21px;
  border-bottom: 1px solid #c6c6c6;
  font-size: 12px;
}

.arrows {
  display: flex;
  gap: 24px;
  width: 100px;
  padding-left: 27px;
}

.arrows path {
  fill: #b9b9b9;
}

.sheet-tabs {
  display: flex;
  align-self: flex-start;
  height: 24px;
}

.sheet-tabs button {
  height: 19px;
  margin-top: 3px;
  padding: 0 13px;
  border-right: 1px solid #999;
}

.sheet-tabs .active {
  position: relative;
  z-index: 1;
  height: 25px;
  margin: -1px 1px 0 0;
  padding: 3px 11px 0;
  border-left: 1px solid #999;
  border-bottom: 2px solid #217346;
  background: #fff;
  color: #217346;
  font-weight: bold;
}

.add {
  margin: 0 auto 0 32px;
}

.sheetbar .dots {
  height: 28px;
}

.hscroll {
  display: flex;
  width: 509px;
  background: #dadada;
}

.hscroll .thumb {
  flex: 1;
  margin-right: 29px;
}

/* status bar */
.status {
  display: flex;
  align-items: center;
  justify-content: flex-end;
  flex: none;
  height: 21px;
  padding-right: 8px;
  background: #f3f2f1;
}

.status path {
  fill: none;
  stroke: #444;
}

.view {
  width: 40px;
  height: 21px;
}

.view.on {
  background: #c8c6c4;
}

.step {
  width: 19px;
}

.status input {
  appearance: none;
  width: 100px;
  height: 11px;
  background: linear-gradient(#a6a6a6, #a6a6a6) no-repeat center / 100% 1px;
}

.status input::-webkit-slider-thumb {
  appearance: none;
  width: 5px;
  height: 11px;
  background: #737373;
}

.percent {
  width: 34px;
  text-align: right;
  color: #666;
}

/* taskbar */
.taskbar {
  display: flex;
  flex: none;
  height: 40px;
  background: #1d1d1d;
  color: #fff;
}

.slot {
  width: 48px;
}

.taskview {
  width: 50px;
}

.open {
  background: linear-gradient(#b0aaa4, #b0aaa4) no-repeat center bottom / 39px 2px;
}

.tasksearch {
  display: flex;
  align-items: center;
  gap: 11px;
  width: 344px;
  padding-left: 10px;
  border: 1px solid #5b5b5b;
  background: #333;
  font-size: 14px;
}

.tasksearch input::placeholder {
  color: #d0d0d0;
  opacity: 1;
}

.mark {
  font-size: 10px;
  font-weight: bold;
  text-anchor: middle;
  fill: #fff;
}

.tray {
  display: flex;
  flex: 1;
  align-items: center;
  justify-content: flex-end;
  gap: 9px;
  padding-right: 24px;
  background: linear-gradient(#666, #666) no-repeat right 4px top / 1px 40px;
}

.desktop {
  color: #ddd;
}

.more {
  align-self: flex-start;
  height: 20px;
}

.clock {
  width: 62px;
  margin-right: 4px;
  line-height: 18px;
}
</style>
